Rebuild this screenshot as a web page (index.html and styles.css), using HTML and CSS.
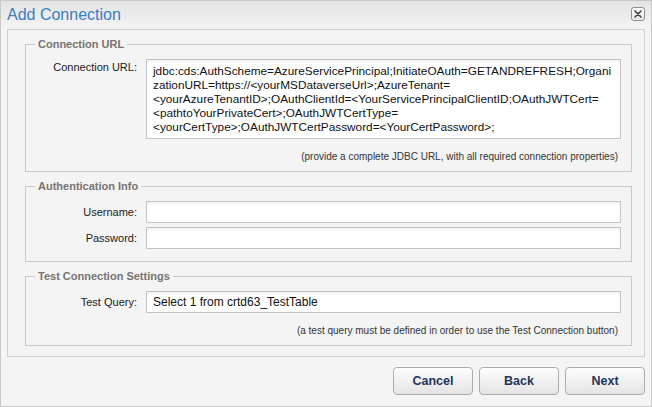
FILE: index.html
```html
<!DOCTYPE html>
<html lang="en">
<head>
    <meta charset="UTF-8">
    <title>Add Connection</title>
    <link rel="stylesheet" href="styles.css">
</head>
<body>

<div class="dialog">
    <div class="titlebar">
        <h1 class="title">Add Connection</h1>
        <button class="close-btn" type="button" title="Close">
            <svg width="12" height="12" viewBox="0 0 12 12">
                <path d="M3 3 L9 9 M9 3 L3 9" stroke="#444" stroke-width="1.7" stroke-linecap="round" fill="none"/>
            </svg>
        </button>
    </div>

    <div class="panel">
        <!-- Connection URL -->
        <fieldset class="group">
            <legend>Connection URL</legend>
            <div class="row row-top">
                <label for="url">Connection URL:</label>
                <textarea id="url" spellcheck="false">jdbc:cds:AuthScheme=AzureServicePrincipal;InitiateOAuth=GETANDREFRESH;Organi
zationURL=https://&lt;yourMSDataverseUrl&gt;;AzureTenant=
&lt;yourAzureTenantID&gt;;OAuthClientId=&lt;YourServicePrincipalClientID;OAuthJWTCert=
&lt;pathtoYourPrivateCert&gt;;OAuthJWTCertType=
&lt;yourCertType&gt;;OAuthJWTCertPassword=&lt;YourCertPassword&gt;;</textarea>
            </div>
            <p class="hint">(provide a complete JDBC URL, with all required connection properties)</p>
        </fieldset>

        <!-- Authentication Info -->
        <fieldset class="group group-auth">
            <legend>Authentication Info</legend>
            <div class="row">
                <label for="username">Username:</label>
                <input type="text" id="username">
            </div>
            <div class="row">
                <label for="password">Password:</label>
                <input type="password" id="password">
            </div>
        </fieldset>

        <!-- Test Connection Settings -->
        <fieldset class="group">
            <legend>Test Connection Settings</legend>
            <div class="row">
                <label for="query">Test Query:</label>
                <input type="text" id="query" value="Select 1 from crtd63_TestTable">
            </div>
            <p class="hint">(a test query must be defined in order to use the Test Connection button)</p>
        </fieldset>
    </div>

    <div class="actions">
        <button class="btn" type="button">Cancel</button>
        <button class="btn" type="button">Back</button>
        <button class="btn" type="button">Next</button>
    </div>
</div>

</body>
</html>
```

FILE: styles.css
```css
* {
    box-sizing: border-box;
}
body {
    margin: 0;
    font-family: "Liberation Sans", Arial, sans-serif;
    font-size: 11px;
    color: #1a1a1a;
    background-color: #f4f4f4;
}
.dialog {
    width: 652px;
    height: 407px;
    border: 1px solid #c9c9c9;
    background-color: #f4f4f4;
    display: flex;
    flex-direction: column;
}
.titlebar {
    height: 28px;
    display: flex;
    justify-content: space-between;
    align-items: flex-start;
    padding: 0 6px 0 6px;
    background: linear-gradient(#e3e3e3, #f4f4f4);
}
.title {
    margin: 0;
    font-size: 16px;
    font-weight: normal;
    line-height: 28px;
    color: #3b7cc1;
}
.close-btn {
    width: 14px;
    height: 14px;
    margin-top: 6px;
    padding: 0;
    border: 1px solid #8e8e8e;
    border-radius: 3px;
    background: linear-gradient(#ffffff, #e8e8e8);
    display: flex;
    align-items: center;
    justify-content: center;
    cursor: pointer;
}
.panel {
    height: 328px;
    margin: 0 6px;
    padding: 8px 12px 10px 17px;
    border: 1px solid #cfcfcf;
}
.group {
    margin: 0;
    padding: 8px 10px 8px 9px;
    border: 1px solid #c9c9c9;
    min-width: 0;
}
.group + .group {
    margin-top: 8px;
}
.group-auth {
    padding-bottom: 12px;
}
legend {
    padding: 0 3px;
    font-size: 11px;
    font-weight: bold;
    line-height: 13px;
    color: #777370;
}
.row {
    display: grid;
    grid-template-columns: 102px 1fr;
    column-gap: 9px;
    align-items: center;
}
.row + .row {
    margin-top: 4px;
}
.row-top {
    align-items: start;
}
.row-top label {
    padding-top: 2px;
}
label {
    text-align: right;
    line-height: 13px;
}
input, textarea {
    margin: 0;
    border: 1px solid #c4c4c4;
    background-color: #fff;
    font-family: "Liberation Sans", Arial, sans-serif;
    font-size: 12px;
    color: #111;
    box-shadow: inset 0 2px 2px rgba(0, 0, 0, 0.05);
}
input {
    height: 22px;
    padding: 0 6px;
}
textarea {
    height: 80px;
    padding: 4px 2px 0 6px;
    font-size: 11.8px;
    line-height: 14px;
    white-space: pre;
    overflow: hidden;
    resize: none;
}
.hint {
    margin: 12px 0 0 0;
    padding-right: 3px;
    font-size: 10px;
    line-height: 12px;
    text-align: right;
    color: #333;
}
.actions {
    display: flex;
    justify-content: flex-end;
    gap: 6px;
    margin: 10px 6px 0 0;
}
.btn {
    width: 80px;
    height: 28px;
    border: 1px solid #acacac;
    border-radius: 4px;
    background: linear-gradient(#fdfdfd, #e4e4e4);
    font-family: "Liberation Sans", Arial, sans-serif;
    font-size: 12.5px;
    font-weight: bold;
    color: #23365a;
    cursor: pointer;
}
```
